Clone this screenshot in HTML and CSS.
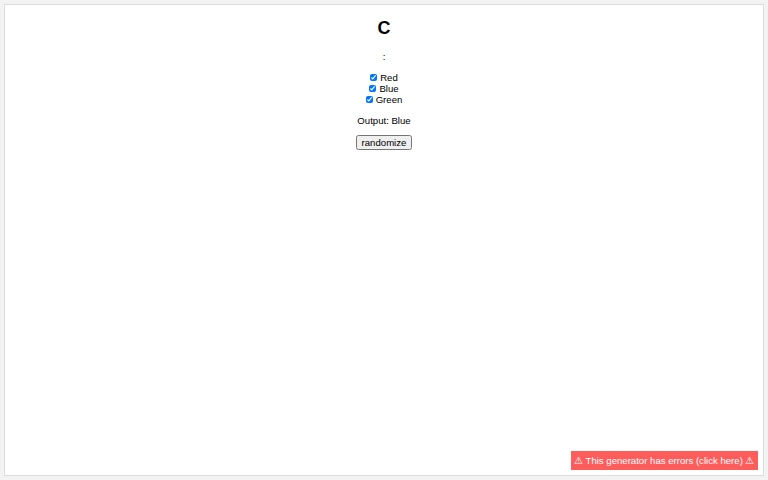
FILE: index.html
```html
<!DOCTYPE html>
<html>
<head>
<meta charset="utf-8">
<link rel="stylesheet" href="styles.css">
</head>
<body>
<div class="frame">
  <h1 class="title">C</h1>
  <p class="line">:</p>
  <div class="opts">
    <label class="opt"><input type="checkbox" checked>Red</label>
    <label class="opt"><input type="checkbox" checked>Blue</label>
    <label class="opt"><input type="checkbox" checked>Green</label>
  </div>
  <p class="line out">Output: Blue</p>
  <div class="btnrow"><button class="btn">randomize</button></div>
  <div class="err">⚠ This generator has errors (click here) ⚠</div>
</div>
</body>
</html>
```
FILE: styles.css
```css
html, body { margin: 0; padding: 0; }
body {
  background: #f3f3f3;
  padding: 4px;
  height: 480px;
  box-sizing: border-box;
  font-family: "Liberation Sans", Arial, sans-serif;
  font-size: 9.6px;
  color: #000;
}
.frame {
  position: relative;
  background: #fff;
  border: 1px solid #dcdcdc;
  height: 100%;
  box-sizing: border-box;
  text-align: center;
  padding-top: 12px;
}
.title {
  font-size: 18px;
  font-weight: bold;
  margin: 0;
  line-height: 22px;
}
.line { margin: 12px 0 0; line-height: 11px; }
.opts { display: flex; flex-direction: column; align-items: center; margin-top: 10px; }
.opt { display: flex; align-items: center; line-height: 11px; height: 11px; }
.opt input { width: 7px; height: 7px; margin: 0 3px 0 0; }
.out { margin-top: 10px; }
.btnrow { margin-top: 9px; display: flex; justify-content: center; }
.btn {
  font-family: "Liberation Sans", Arial, sans-serif;
  font-size: 9.6px;
  height: 15px;
  line-height: 10px;
  padding: 0 3.5px;
}
.err {
  position: absolute;
  right: 5px;
  bottom: 5px;
  background: #ff5c5c;
  color: #fff;
  font-size: 9.6px;
  line-height: 11px;
  padding: 4px 3.5px 4.5px;
  cursor: pointer;
}
```
